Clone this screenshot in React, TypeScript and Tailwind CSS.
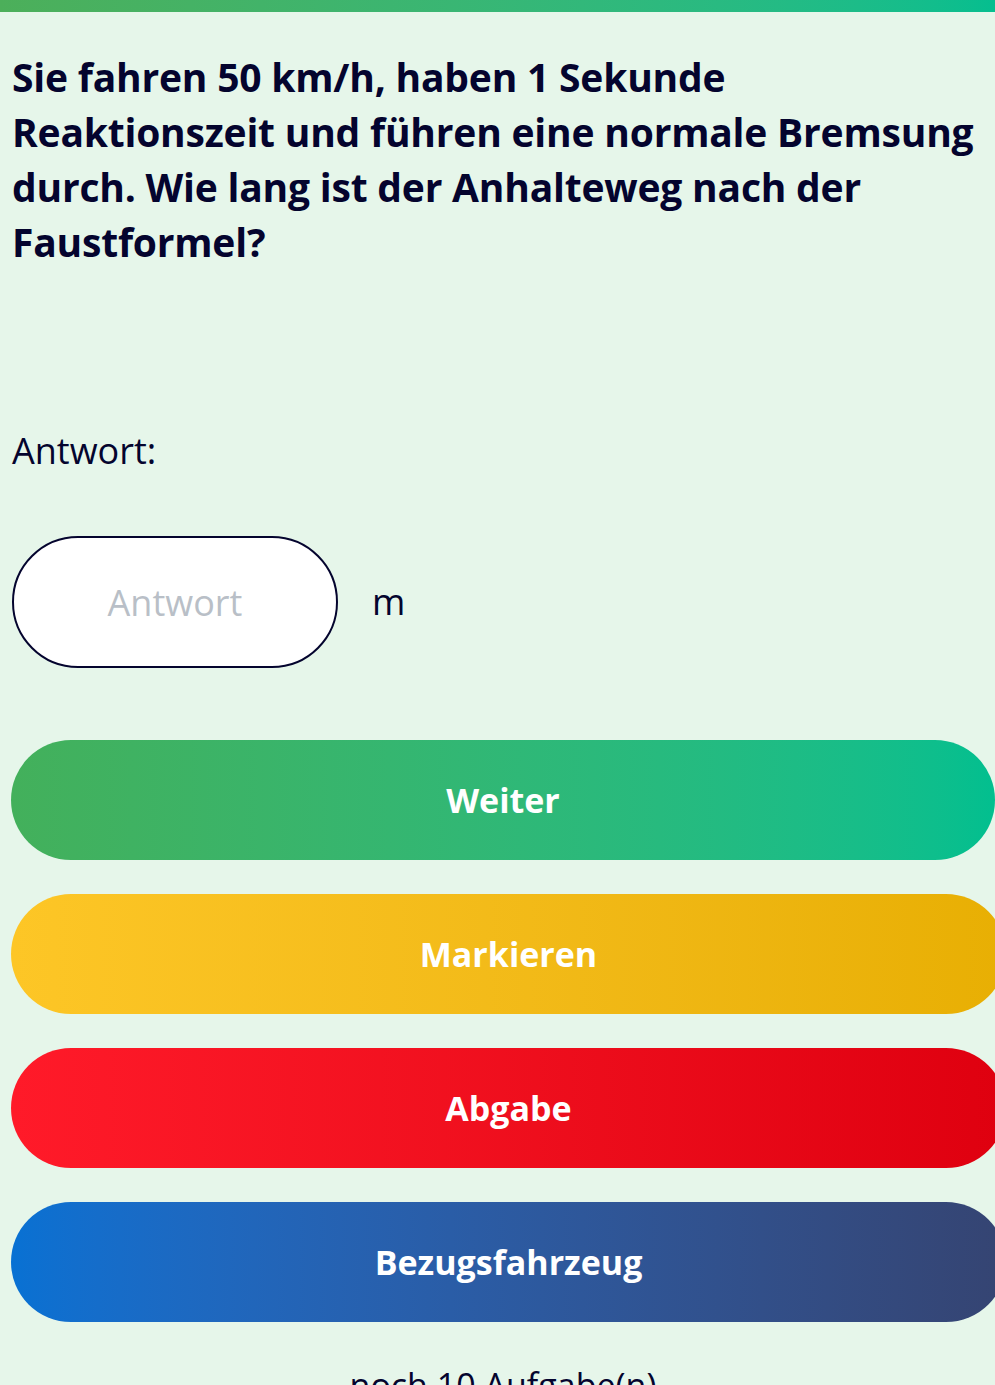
import React from 'react';

const font = { fontFamily: '"Open Sans", "Noto Sans", sans-serif' };

interface ActionButtonProps {
  label: string;
  className: string;
}

function ActionButton({ label, className }: ActionButtonProps) {
  return (
    <button
      type="button"
      className={`h-[120px] shrink-0 rounded-full text-[34px] font-bold text-white ${className}`}
    >
      {label}
    </button>
  );
}

export default function App() {
  return (
    <div style={font} className="min-h-[1385px] w-full overflow-x-hidden bg-[#e6f6ea] text-[#04042e]">
      <div className="h-[12px] w-full bg-gradient-to-r from-[#4caf5a] to-[#05be8f]" />

      <div className="flex flex-col px-[12px]">
        <h1 className="mt-[37px] pr-[4px] text-[39px] font-bold leading-[55px] tracking-[-0.2px]">
          Sie fahren 50 km/h, haben 1 Sekunde Reaktionszeit und führen eine normale Bremsung durch. Wie
          lang ist der Anhalteweg nach der Faustformel?
        </h1>

        <p className="mt-[155px] text-[36px] leading-[54px]">Antwort:</p>

        <div className="mt-[58px] flex items-center gap-[34px]">
          <input
            type="text"
            placeholder="Antwort"
            className="h-[132px] w-[326px] rounded-full border-2 border-[#04042e] bg-white text-center text-[36px] outline-none placeholder:text-[#b9bfc7]"
          />
          <span className="text-[36px]">m</span>
        </div>
      </div>

      <div className="mt-[72px] flex flex-col gap-[34px] pl-[11px]">
        <ActionButton label="Weiter" className="w-[984px] bg-gradient-to-r from-[#43b05b] to-[#02bf8f]" />
        <ActionButton label="Markieren" className="w-[995px] bg-gradient-to-r from-[#fdc626] to-[#e8af03]" />
        <ActionButton label="Abgabe" className="w-[995px] bg-gradient-to-r from-[#ff1a29] to-[#df000f]" />
        <ActionButton label="Bezugsfahrzeug" className="w-[995px] bg-gradient-to-r from-[#0871d3] to-[#354472]" />
      </div>

      <p className="mt-[38px] pl-[11px] text-center text-[34px] leading-[50px]">noch 10 Aufgabe(n)</p>
    </div>
  );
}
